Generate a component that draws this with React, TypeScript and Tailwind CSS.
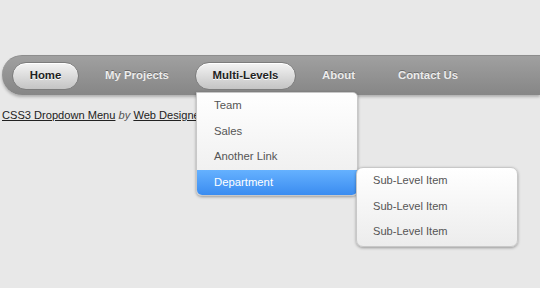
const font = { fontFamily: '"Liberation Sans", Arial, sans-serif' };

const navItems = [
  { label: "Home", pill: true, width: "w-[67px]" },
  { label: "My Projects", pill: false, width: "w-[98px]" },
  { label: "Multi-Levels", pill: true, width: "w-[101px]" },
  { label: "About", pill: false, width: "w-[67px]" },
  { label: "Contact Us", pill: false, width: "w-[94px]" },
];

const dropItems = ["Team", "Sales", "Another Link", "Department"];
const subItems = ["Sub-Level Item", "Sub-Level Item", "Sub-Level Item"];

function NavItem({ label, pill, width }: { label: string; pill: boolean; width: string }) {
  if (pill) {
    return (
      <a
        className={`${width} flex h-[28px] items-center justify-center rounded-full border border-[#7c7c7c] bg-gradient-to-b from-[#f4f4f4] to-[#c4c4c4] text-[11.4px] font-bold text-[#222] shadow-[inset_0_1px_0_#fff] [text-shadow:0_1px_0_#fff]`}
      >
        {label}
      </a>
    );
  }
  return (
    <a
      className={`${width} flex h-[28px] items-center justify-center text-[11.4px] font-bold text-[#ececec] [text-shadow:0_-1px_0_#6a6a6a]`}
    >
      {label}
    </a>
  );
}

export default function App() {
  return (
    <div className="relative h-[288px] w-[540px] overflow-hidden bg-[#e8e8e8]" style={font}>
      <nav className="ml-[2px] mt-[55px] flex h-[40px] items-center gap-[9px] rounded-l-[20px] border-t border-[#8d8d8d] bg-gradient-to-b from-[#a0a0a0] to-[#868686] pl-[10px] shadow-[0_2px_3px_rgba(0,0,0,0.25)]">
        {navItems.map((item) => (
          <NavItem key={item.label} {...item} />
        ))}
      </nav>

      {/* credit line sits under the open dropdown */}
      <p className="mt-[13px] whitespace-nowrap pl-[2px] text-[11.1px] leading-[14px] text-[#222]">
        <a className="underline">CSS3 Dropdown Menu</a> <i className="text-[#555]">by</i>{" "}
        <a className="underline">Web Designer Wall</a>
      </p>

      <ul className="absolute left-[196px] top-[92px] w-[162px] overflow-hidden rounded-b-[6px] rounded-tr-[5px] border border-[#c8c8c8] bg-gradient-to-b from-white to-[#ececec] shadow-[0_1px_3px_rgba(0,0,0,0.35)]">
        {dropItems.map((item) => (
          <li
            key={item}
            className={
              item === "Department"
                ? "flex h-[25px] items-center bg-gradient-to-b from-[#65b1ff] to-[#3a8cf0] pl-[17px] text-[11.3px] text-white"
                : "flex h-[25.5px] items-center pl-[17px] text-[11.3px] text-[#555]"
            }
          >
            {item}
          </li>
        ))}
      </ul>

      <ul className="absolute left-[356px] top-[167px] w-[162px] rounded-[7px] border border-[#c8c8c8] bg-gradient-to-b from-white to-[#ececec] pb-[1px] shadow-[0_1px_3px_rgba(0,0,0,0.35)]">
        {subItems.map((item, i) => (
          <li key={i} className="flex h-[25.5px] items-center pl-[16px] text-[11.1px] text-[#555]">
            {item}
          </li>
        ))}
      </ul>
    </div>
  );
}
